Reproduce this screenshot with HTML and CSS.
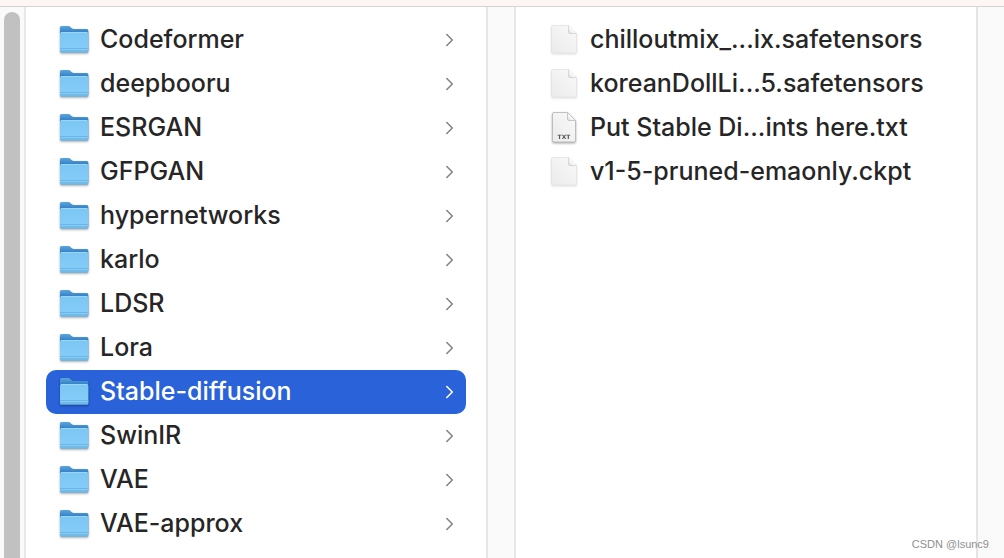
FILE: index.html
```html
<!DOCTYPE html>
<html lang="en">
<head>
<meta charset="utf-8">
<meta name="viewport" content="width=device-width, initial-scale=1">
<title>Stable-diffusion</title>
<link rel="stylesheet" href="styles.css">
</head>
<body>
<svg class="defs" width="0" height="0" aria-hidden="true">
  <defs>
    <linearGradient id="folder-back" x1="0" y1="0" x2="0" y2="1">
      <stop offset="0" stop-color="#5ba6d9"/><stop offset=".25" stop-color="#3580c6"/><stop offset="1" stop-color="#3580c6"/>
    </linearGradient>
    <linearGradient id="folder-front" x1="0" y1="0" x2="0" y2="1">
      <stop offset="0" stop-color="#7cc6f5"/><stop offset="1" stop-color="#86cdf8"/>
    </linearGradient>
    <linearGradient id="paper" x1="0" y1="1" x2="1" y2="0">
      <stop offset="0" stop-color="#ebebeb"/><stop offset="1" stop-color="#f9f9f9"/>
    </linearGradient>
    <linearGradient id="fold" x1="0" y1="1" x2="1" y2="0">
      <stop offset="0" stop-color="#d6d6d6"/><stop offset=".4" stop-color="#fafafa"/><stop offset="1" stop-color="#f0f0f0"/>
    </linearGradient>
  </defs>
  <symbol id="folder" viewBox="0 0 32 32">
    <path d="M2 27V3.500Q2 2 3.500 2H10.500Q11.500 2 12.500 3L13.500 4Q14.500 5 16 5H29Q30.300 5 30.300 6.500V27Z" fill="url(#folder-back)"/>
    <path d="M2 10Q2 8 4 8H28.300Q30.300 8 30.300 10V27Q30.300 28.500 29 28.500H3.500Q2 28.500 2 27Z" fill="url(#folder-front)"/>
    <path d="M3 8.500H29.300" stroke="#98d6fa" stroke-width="1"/>
    <path d="M2 24.500H30.300" stroke="#6bb6e6" stroke-width="1"/>
    <path d="M2 26.500H30.300" stroke="#72bbe9" stroke-width="1"/>
    <path d="M2.500 28H30" stroke="#5ea6d4" stroke-width="1"/>
  </symbol>
  <symbol id="document" viewBox="0 0 32 32">
    <path d="M5 1.500H20.500L28.500 9.500V27.500Q28.500 29 27 29H5Q3.500 29 3.500 27.500V3Q3.500 1.500 5 1.500Z" fill="url(#paper)" stroke="#e2e2e2" stroke-width=".8"/>
    <path d="M20.500 1.500V8Q20.500 9.500 22 9.500H28.500Z" fill="url(#fold)"/>
    <path d="M20.500 1.500V8Q20.500 9.500 22 9.500H28.500" fill="none" stroke="#cfcfcf" stroke-width=".8"/>
  </symbol>
  <symbol id="chevron" viewBox="0 0 10 14">
    <path d="M2.800 1.500L8.300 7L2.800 12.500" fill="none" stroke="currentColor" stroke-width="1.600" stroke-linecap="round" stroke-linejoin="round"/>
  </symbol>
</svg>

<div class="window">
  <div class="toolbar-edge"></div>
  <main class="browser">
    <div class="gutter gutter-scroll"><div class="scroll-thumb"></div></div>
    <nav class="column" aria-label="models">
      <button class="row" type="button"><svg class="icon"><use href="#folder"/></svg><span class="name">Codeformer</span><svg class="chevron"><use href="#chevron"/></svg></button>
      <button class="row" type="button"><svg class="icon"><use href="#folder"/></svg><span class="name">deepbooru</span><svg class="chevron"><use href="#chevron"/></svg></button>
      <button class="row" type="button"><svg class="icon"><use href="#folder"/></svg><span class="name">ESRGAN</span><svg class="chevron"><use href="#chevron"/></svg></button>
      <button class="row" type="button"><svg class="icon"><use href="#folder"/></svg><span class="name">GFPGAN</span><svg class="chevron"><use href="#chevron"/></svg></button>
      <button class="row" type="button"><svg class="icon"><use href="#folder"/></svg><span class="name">hypernetworks</span><svg class="chevron"><use href="#chevron"/></svg></button>
      <button class="row" type="button"><svg class="icon"><use href="#folder"/></svg><span class="name">karlo</span><svg class="chevron"><use href="#chevron"/></svg></button>
      <button class="row" type="button"><svg class="icon"><use href="#folder"/></svg><span class="name">LDSR</span><svg class="chevron"><use href="#chevron"/></svg></button>
      <button class="row" type="button"><svg class="icon"><use href="#folder"/></svg><span class="name">Lora</span><svg class="chevron"><use href="#chevron"/></svg></button>
      <button class="row selected" type="button" aria-current="true"><svg class="icon"><use href="#folder"/></svg><span class="name">Stable-diffusion</span><svg class="chevron"><use href="#chevron"/></svg></button>
      <button class="row" type="button"><svg class="icon"><use href="#folder"/></svg><span class="name">SwinIR</span><svg class="chevron"><use href="#chevron"/></svg></button>
      <button class="row" type="button"><svg class="icon"><use href="#folder"/></svg><span class="name">VAE</span><svg class="chevron"><use href="#chevron"/></svg></button>
      <button class="row" type="button"><svg class="icon"><use href="#folder"/></svg><span class="name">VAE-approx</span><svg class="chevron"><use href="#chevron"/></svg></button>
    </nav>
    <div class="gutter"></div>
    <section class="column" aria-label="Stable-diffusion">
      <button class="row" type="button"><svg class="icon paper"><use href="#document"/></svg><span class="name">chilloutmix_...ix.safetensors</span></button>
      <button class="row" type="button"><svg class="icon paper"><use href="#document"/></svg><span class="name">koreanDollLi...5.safetensors</span></button>
      <button class="row" type="button">
        <svg class="icon" viewBox="0 0 32 32">
          <path d="M6 .5H19.500L27.500 8.500V28.500Q27.500 30 26 30H6Q4.500 30 4.500 28.500V2Q4.500 .5 6 .5Z" fill="url(#paper)" stroke="#b4b4b4" stroke-width=".8"/>
          <path d="M19.500 .5V7Q19.500 8.500 21 8.500H27.500Z" fill="url(#fold)" stroke="#bdbdbd" stroke-width=".8"/>
          <text x="16" y="27" text-anchor="middle" class="file-kind">TXT</text>
        </svg>
        <span class="name">Put Stable Di...ints here.txt</span>
      </button>
      <button class="row" type="button"><svg class="icon paper"><use href="#document"/></svg><span class="name">v1-5-pruned-emaonly.ckpt</span></button>
    </section>
    <div class="gutter gutter-last"></div>
  </main>
  <div class="watermark">CSDN @lsunc9</div>
</div>
</body>
</html>
```
FILE: styles.css
```css
* { box-sizing: border-box; }

body {
  margin: 0;
  background: #fff;
  color: #262626;
  font-family: Inter, "Liberation Sans", sans-serif;
}

.defs { position: absolute; }

.window {
  position: relative;
  display: flex;
  flex-direction: column;
  height: 100vh;
  overflow: hidden;
}

.toolbar-edge {
  flex: none;
  height: 7px;
  background: #fdf6f2;
  border-bottom: 1px solid #d4d4d4;
}

.browser {
  flex: 1;
  min-height: 0;
  display: grid;
  grid-template-columns: 26px minmax(0, 1fr) 28px minmax(0, 1fr) 26px;
}

.gutter {
  background: #fafafa;
  border-right: 2px solid #e8e8e8;
}

.gutter-scroll {
  display: flex;
  padding: 5px 4px 0;
}

.gutter-last { border-right: 0; }

.scroll-thumb {
  width: 16px;
  background: #c1c1c1;
  border-radius: 8px 8px 0 0;
}

.column {
  padding: 11px 20px 0;
  border-right: 2px solid #e5e5e5;
  overflow: hidden;
}

.row {
  display: flex;
  align-items: center;
  gap: 10px;
  width: 100%;
  height: 44px;
  padding: 0 12px;
  border: 0;
  border-radius: 10px;
  background: none;
  color: inherit;
  font: inherit;
  font-size: 25px;
  font-weight: 500;
  line-height: 32px;
  text-align: left;
}

.row.selected {
  background: #2962d9;
  color: #fff;
}

.icon {
  flex: none;
  width: 32px;
  height: 32px;
  filter: drop-shadow(0 1px 1px rgba(0, 0, 0, 0.35));
}

.icon.paper { filter: drop-shadow(0 1px 1px rgba(0, 0, 0, 0.12)); }

.file-kind {
  fill: #555;
  font: bold 6px "DejaVu Sans", sans-serif;
}

.name {
  flex: 1;
  min-width: 0;
  padding-bottom: 2px;
  white-space: nowrap;
}

.chevron {
  flex: none;
  width: 10px;
  height: 14px;
  color: #858585;
}

.selected .chevron { color: #fff; }

.watermark {
  position: absolute;
  right: 15px;
  bottom: 6px;
  color: #8f8f8f;
  font: 11px/16px "Liberation Sans", Arial, sans-serif;
}
```
